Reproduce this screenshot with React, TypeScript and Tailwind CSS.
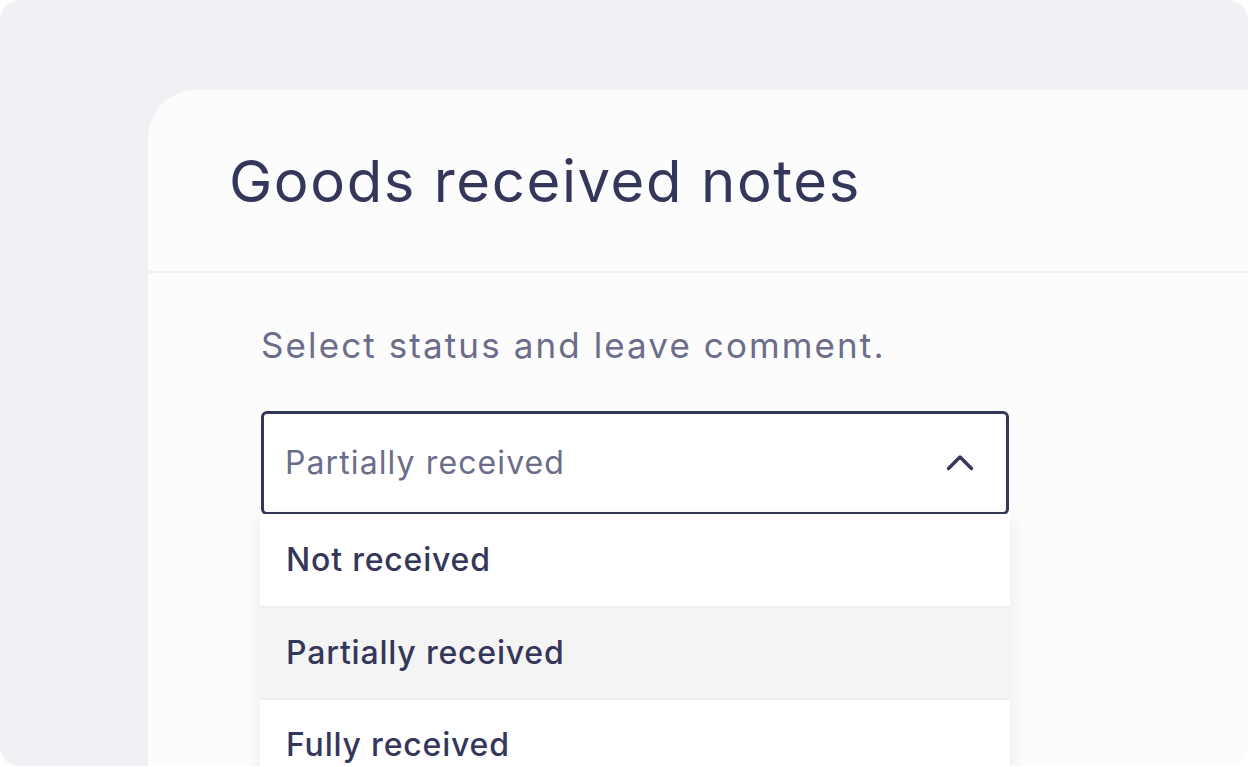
const options = ['Not received', 'Partially received', 'Fully received']

export default function App() {
  const selected = 'Partially received'

  return (
    <div className="w-[1248px] h-[767px] bg-white" style={{ fontFamily: 'Inter, "Noto Sans", sans-serif' }}>
      <div className="flex flex-col h-[766px] rounded-[20px] bg-[#f0f0f5] overflow-hidden">
        <div className="ml-[148px] mt-[90px] flex-1 flex flex-col rounded-tl-[48px] bg-[#fcfcfd]">
          <div className="h-[183px] border-b-2 border-[#efeff4] pl-[81px] pt-[55px]">
            <h1 className="text-[58px] leading-[72px] text-[#34375a] tracking-[1.6px]">Goods received notes</h1>
          </div>

          <div className="pl-[113px] pt-[50px]">
            <p className="text-[35px] leading-[44px] text-[#6b6d8a] tracking-[2.1px]">Select status and leave comment.</p>

            <div className="relative mt-[44px] w-[748px]">
              <button className="flex w-full h-[104px] items-center justify-between rounded-[6px] border-[3px] border-[#34375a] bg-white pl-[21px] pr-[32px]">
                <span className="text-[32px] text-[#6b6d8a] tracking-[1.1px]">{selected}</span>
                <svg width="28" height="18" viewBox="0 0 28 18" fill="none" className="mb-[2px]">
                  <path d="M2.5 15.5 L14 4 L25.5 15.5" stroke="#34375a" strokeWidth="3.4" strokeLinecap="round" strokeLinejoin="round" />
                </svg>
              </button>

              <ul className="absolute left-[-1px] top-[103px] w-[750px] bg-white shadow-[0_4px_16px_rgba(0,0,0,0.08)]">
                {options.map((opt, i) => (
                  <li
                    key={opt}
                    className={
                      'flex h-[92px] items-center pl-[26px] text-[32px] font-medium text-[#34375a] tracking-[0.8px] ' +
                      (i > 0 ? 'border-t-2 border-[#efefef] ' : '') +
                      (opt === selected ? 'bg-[#f4f4f4]' : 'bg-white')
                    }
                  >
                    {opt}
                  </li>
                ))}
              </ul>
            </div>
          </div>
        </div>
      </div>
    </div>
  )
}
